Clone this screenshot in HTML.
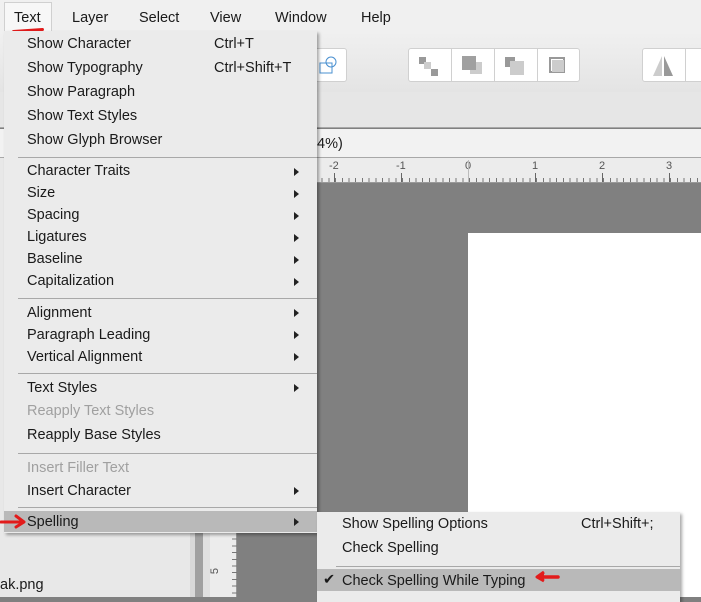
<!DOCTYPE html>
<html><head><style>
*{margin:0;padding:0;box-sizing:border-box}
body{width:701px;height:597px;overflow:hidden;position:relative;background:#808080;font-family:"Segoe UI","Liberation Sans",sans-serif;font-size:14.5px;color:#1a1a1a}
.a{position:absolute}
.t{position:absolute;white-space:nowrap;line-height:18px}
.sep{position:absolute;height:1px;background:#a8a8a8}
.arr{position:absolute;width:0;height:0;border-top:4px solid transparent;border-bottom:4px solid transparent;border-left:5px solid #222}
.dis{color:#a0a0a0}
.btn{position:absolute;top:48px;height:34px;background:#fff;border:1px solid #d0d0d0;border-radius:3px}
</style></head><body>
<div class="a" style="left:0;top:0;width:701px;height:31px;background:#f0f0f0"></div>
<div class="a" style="left:4px;top:2px;width:48px;height:30px;background:#f7f7f7;border:1px solid #d0d0d0;border-bottom:none"></div>
<div class="t" style="left:14px;top:9px">Text</div>
<div class="a" style="left:12px;top:29px;width:32px;height:3px;background:#e21b1b;border-radius:2px;transform:rotate(-4deg)"></div>
<div class="t" style="left:72px;top:9px">Layer</div>
<div class="t" style="left:139px;top:9px">Select</div>
<div class="t" style="left:210px;top:9px">View</div>
<div class="t" style="left:275px;top:9px">Window</div>
<div class="t" style="left:361px;top:9px">Help</div>
<div class="a" style="left:0;top:31px;width:701px;height:61px;background:linear-gradient(#f0f0f0,#e4e4e4)"></div>
<div class="a" style="left:0;top:92px;width:701px;height:36px;background:#e6e6e6;border-bottom:1px solid #a8a8a8"></div>
<div class="a" style="left:0;top:129px;width:701px;height:29px;background:#f2f2f2;border-bottom:1px solid #a8a8a8"></div>
<div class="a" style="left:0;top:158px;width:6px;height:375px;background:#e8e8e8"></div>
<div class="t" style="left:317px;top:135px">4%)</div>
<div class="btn" style="left:300px;width:47px"></div>
<svg class="a" style="left:318px;top:54px" width="22" height="22"><circle cx="13" cy="8" r="5" fill="none" stroke="#4a90d0"/><rect x="2" y="9" width="12" height="10" fill="none" stroke="#4a90d0"/></svg>
<div class="btn" style="left:408px;width:172px"></div>
<div class="a" style="left:451px;top:49px;width:1px;height:32px;background:#d0d0d0"></div>
<div class="a" style="left:494px;top:49px;width:1px;height:32px;background:#d0d0d0"></div>
<div class="a" style="left:537px;top:49px;width:1px;height:32px;background:#d0d0d0"></div>
<div class="a" style="left:419px;top:57px;width:7px;height:7px;background:#999"></div>
<div class="a" style="left:424px;top:62px;width:7px;height:7px;background:#ccc"></div>
<div class="a" style="left:431px;top:69px;width:7px;height:7px;background:#999"></div>
<div class="a" style="left:470px;top:62px;width:12px;height:12px;background:#ccc"></div>
<div class="a" style="left:462px;top:56px;width:14px;height:14px;background:#a0a0a0"></div>
<div class="a" style="left:505px;top:57px;width:10px;height:10px;background:#999"></div>
<div class="a" style="left:510px;top:61px;width:14px;height:14px;background:#ccc"></div>
<div class="a" style="left:549px;top:57px;width:16px;height:16px;border:2px solid #999"></div>
<div class="a" style="left:552px;top:60px;width:12px;height:12px;background:#ccc"></div>
<div class="btn" style="left:642px;width:70px"></div>
<div class="a" style="left:685px;top:49px;width:1px;height:32px;background:#d0d0d0"></div>
<svg class="a" style="left:650px;top:54px" width="26" height="24"><polygon points="12,2 12,22 3,22" fill="#ccc"/><polygon points="14,2 14,22 23,22" fill="#999"/></svg>
<div class="a" style="left:317px;top:158px;width:384px;height:25px;background:#ececec;border-bottom:1px solid #999"></div>
<div class="a" style="left:317px;top:178px;width:384px;height:4px;background:repeating-linear-gradient(90deg,transparent 0 5.7px,#777 5.7px 6.7px);background-position:-1px 0"></div>
<div class="t" style="left:329px;top:157px;font-size:11px;color:#555">-2</div>
<div class="t" style="left:396px;top:157px;font-size:11px;color:#555">-1</div>
<div class="t" style="left:465px;top:157px;font-size:11px;color:#555">0</div>
<div class="t" style="left:532px;top:157px;font-size:11px;color:#555">1</div>
<div class="t" style="left:599px;top:157px;font-size:11px;color:#555">2</div>
<div class="t" style="left:666px;top:157px;font-size:11px;color:#555">3</div>
<div class="a" style="left:334px;top:173px;width:1px;height:9px;background:#666"></div>
<div class="a" style="left:401px;top:173px;width:1px;height:9px;background:#666"></div>
<div class="a" style="left:468px;top:160px;width:1px;height:22px;background:#bbb"></div>
<div class="a" style="left:535px;top:173px;width:1px;height:9px;background:#666"></div>
<div class="a" style="left:602px;top:173px;width:1px;height:9px;background:#666"></div>
<div class="a" style="left:669px;top:173px;width:1px;height:9px;background:#666"></div>
<div class="a" style="left:468px;top:233px;width:233px;height:364px;background:#fff"></div>
<div class="a" style="left:0;top:533px;width:190px;height:64px;background:#e8e8e8"></div>
<div class="a" style="left:190px;top:533px;width:5px;height:64px;background:#d8d8d8"></div>
<div class="a" style="left:195px;top:533px;width:8px;height:64px;background:#a0a0a0"></div>
<div class="a" style="left:203px;top:533px;width:7px;height:64px;background:#e0e0e0"></div>
<div class="a" style="left:210px;top:533px;width:27px;height:64px;background:#ececec;border-right:1px solid #999"></div>
<div class="a" style="left:232px;top:533px;width:5px;height:64px;background:repeating-linear-gradient(180deg,transparent 0 5.7px,#777 5.7px 6.7px)"></div>
<div class="t" style="left:212px;top:562px;font-size:11px;color:#555;transform:rotate(-90deg)">5</div>
<div class="t" style="left:0;top:576px">ak.png</div>
<div class="a" style="left:4px;top:31px;width:313px;height:502px;background:#ebebeb;box-shadow:2px 2px 3px rgba(0,0,0,.35)"></div>
<div class="t" style="left:27px;top:35px">Show Character</div><div class="t" style="left:214px;top:35px">Ctrl+T</div>
<div class="t" style="left:27px;top:59px">Show Typography</div><div class="t" style="left:214px;top:59px">Ctrl+Shift+T</div>
<div class="t" style="left:27px;top:83px">Show Paragraph</div>
<div class="t" style="left:27px;top:107px">Show Text Styles</div>
<div class="t" style="left:27px;top:131px">Show Glyph Browser</div>
<div class="sep" style="left:18px;top:157px;width:299px"></div>
<div class="t" style="left:27px;top:162px">Character Traits</div><div class="arr" style="left:294px;top:168px"></div>
<div class="t" style="left:27px;top:184px">Size</div><div class="arr" style="left:294px;top:190px"></div>
<div class="t" style="left:27px;top:206px">Spacing</div><div class="arr" style="left:294px;top:212px"></div>
<div class="t" style="left:27px;top:228px">Ligatures</div><div class="arr" style="left:294px;top:234px"></div>
<div class="t" style="left:27px;top:250px">Baseline</div><div class="arr" style="left:294px;top:256px"></div>
<div class="t" style="left:27px;top:272px">Capitalization</div><div class="arr" style="left:294px;top:278px"></div>
<div class="sep" style="left:18px;top:298px;width:299px"></div>
<div class="t" style="left:27px;top:304px">Alignment</div><div class="arr" style="left:294px;top:309px"></div>
<div class="t" style="left:27px;top:326px">Paragraph Leading</div><div class="arr" style="left:294px;top:331px"></div>
<div class="t" style="left:27px;top:348px">Vertical Alignment</div><div class="arr" style="left:294px;top:353px"></div>
<div class="sep" style="left:18px;top:373px;width:299px"></div>
<div class="t" style="left:27px;top:379px">Text Styles</div><div class="arr" style="left:294px;top:384px"></div>
<div class="t dis" style="left:27px;top:402px">Reapply Text Styles</div>
<div class="t" style="left:27px;top:426px">Reapply Base Styles</div>
<div class="sep" style="left:18px;top:453px;width:299px"></div>
<div class="t dis" style="left:27px;top:459px">Insert Filler Text</div>
<div class="t" style="left:27px;top:482px">Insert Character</div><div class="arr" style="left:294px;top:487px"></div>
<div class="sep" style="left:18px;top:507px;width:299px"></div>
<div class="a" style="left:4px;top:511px;width:313px;height:21px;background:#b9b9b9"></div>
<div class="t" style="left:27px;top:513px">Spelling</div><div class="arr" style="left:294px;top:518px"></div>
<svg class="a" style="left:0;top:513px" width="28" height="16"><path d="M1 9 H20" stroke="#e21b1b" stroke-width="3" stroke-linecap="round"/><path d="M16 3 L24 9 L16 14" fill="none" stroke="#e21b1b" stroke-width="3" stroke-linecap="round" stroke-linejoin="round"/></svg>
<div class="a" style="left:317px;top:512px;width:363px;height:90px;background:#ebebeb;box-shadow:2px 2px 3px rgba(0,0,0,.35)"></div>
<div class="t" style="left:342px;top:515px">Show Spelling Options</div><div class="t" style="left:581px;top:515px">Ctrl+Shift+;</div>
<div class="t" style="left:342px;top:539px">Check Spelling</div>
<div class="sep" style="left:336px;top:566px;width:344px"></div>
<div class="a" style="left:317px;top:569px;width:363px;height:22px;background:#b9b9b9"></div>
<div class="t" style="left:323px;top:571px">✔</div>
<div class="t" style="left:342px;top:572px">Check Spelling While Typing</div>
<svg class="a" style="left:534px;top:570px" width="26" height="16"><path d="M24 7 H10" stroke="#e21b1b" stroke-width="3.5" stroke-linecap="round"/><path d="M10 2 L3 7 L10 11" fill="#e21b1b" stroke="#e21b1b" stroke-width="3" stroke-linejoin="round"/></svg>
</body></html>
